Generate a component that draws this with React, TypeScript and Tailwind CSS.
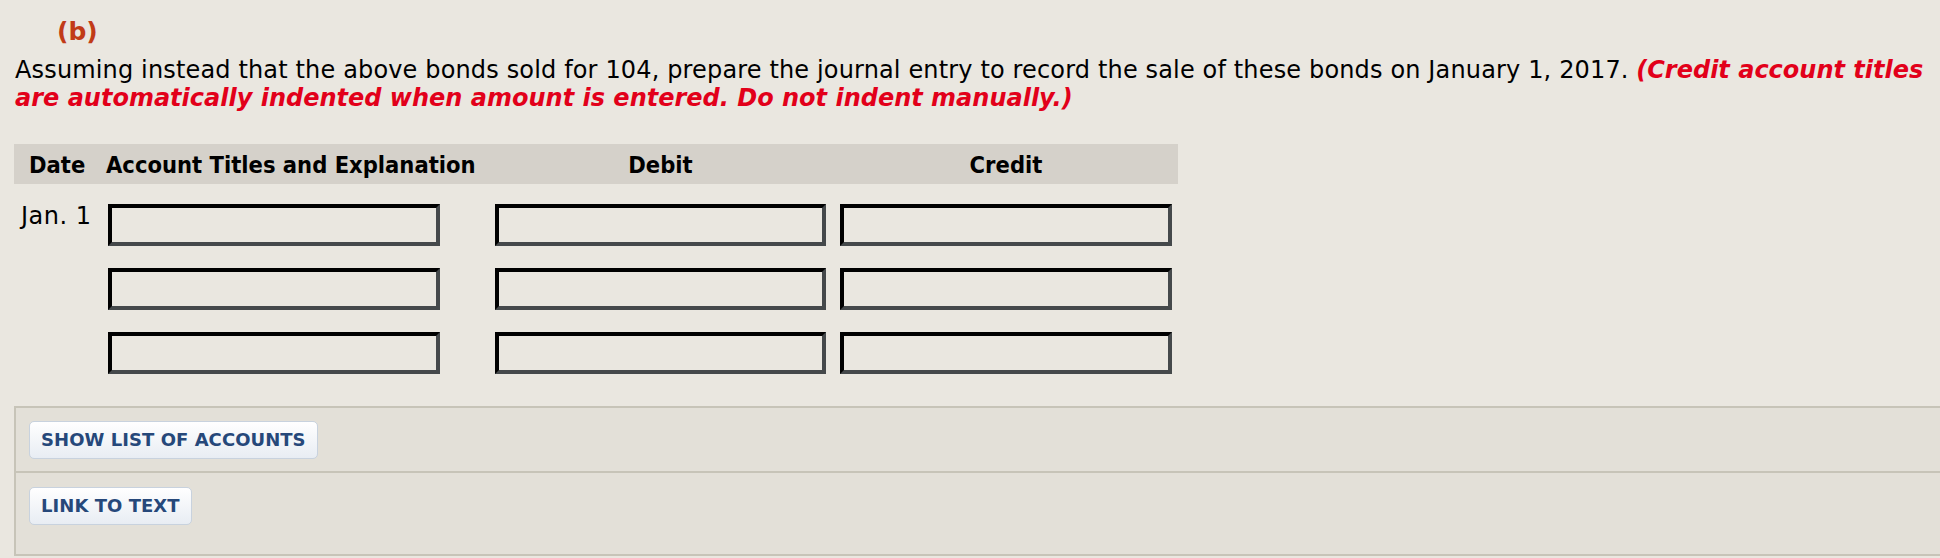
import React from "react";

function Box() {
  return (
    <div className="h-[42px] w-full border-[4px] border-t-black border-l-black border-b-[#45494b] border-r-[#45494b] bg-[#eae7e0]" />
  );
}

function Btn({ label }: { label: string }) {
  return (
    <button className="h-[38px] rounded-[5px] border border-[#c8d2de] bg-gradient-to-b from-white to-[#e8edf3] px-[11px] text-[18px] tracking-[0.05px] font-bold leading-[36px] text-[#26487a] font-['DejaVu_Sans',sans-serif]">
      {label}
    </button>
  );
}

export default function App() {
  const rows = [0, 1, 2];
  return (
    <div className="w-[1940px] h-[558px] overflow-hidden bg-[#eae7e0] text-black font-['DejaVu_Sans','Verdana',sans-serif]">
      <div className="pt-[18px] pl-[57px] text-[25px] leading-[28px] font-bold text-[#c13b17]">(b)</div>
      <p className="mt-[10px] pl-[15px] text-[24px] leading-[28px] whitespace-nowrap">
        <span className="tracking-[0.15px]">
          Assuming instead that the above bonds sold for 104, prepare the journal entry to record the sale of these bonds on January 1, 2017.
        </span>{" "}
        <span className="font-bold italic text-[#e2001a]">
          (Credit account titles
          <br />
          are automatically indented when amount is entered. Do not indent manually.)
        </span>
      </p>

      <div className="ml-[14px] mt-[32px] w-[1164px]">
        <div className="grid h-[40px] grid-cols-[90px_383px_347px_344px] bg-[#d5d1ca] pt-[3px] text-[23.5px] leading-[37px] font-bold font-stretch-condensed font-['DejaVu_Sans_Condensed','DejaVu_Sans',sans-serif]">
          <div className="pl-[15px]">Date</div>
          <div className="pl-[2px]">Account Titles and Explanation</div>
          <div className="text-center">Debit</div>
          <div className="text-center">Credit</div>
        </div>
        <div className="mt-[20px] flex flex-col gap-[22px]">
          {rows.map((r) => (
            <div key={r} className="grid grid-cols-[90px_383px_347px_344px]">
              <div className="pl-[7px] text-[24px] tracking-[0.5px] leading-[24px]">{r === 0 ? "Jan. 1" : ""}</div>
              <div className="pl-[4px] pr-[47px]">
                <Box />
              </div>
              <div className="pl-[8px] pr-[8px]">
                <Box />
              </div>
              <div className="pl-[6px] pr-[6px]">
                <Box />
              </div>
            </div>
          ))}
        </div>
      </div>

      <div className="ml-[14px] mt-[32px] border-l-2 border-t-2 border-b-2 border-[#c7c4b8] bg-[#e3e0d8]">
        <div className="pl-[13px] pt-[13px] pb-[12px]">
          <Btn label="SHOW LIST OF ACCOUNTS" />
        </div>
        <div className="border-t-2 border-[#c7c4b8] pl-[13px] pt-[14px] pb-[29px]">
          <Btn label="LINK TO TEXT" />
        </div>
      </div>
    </div>
  );
}
